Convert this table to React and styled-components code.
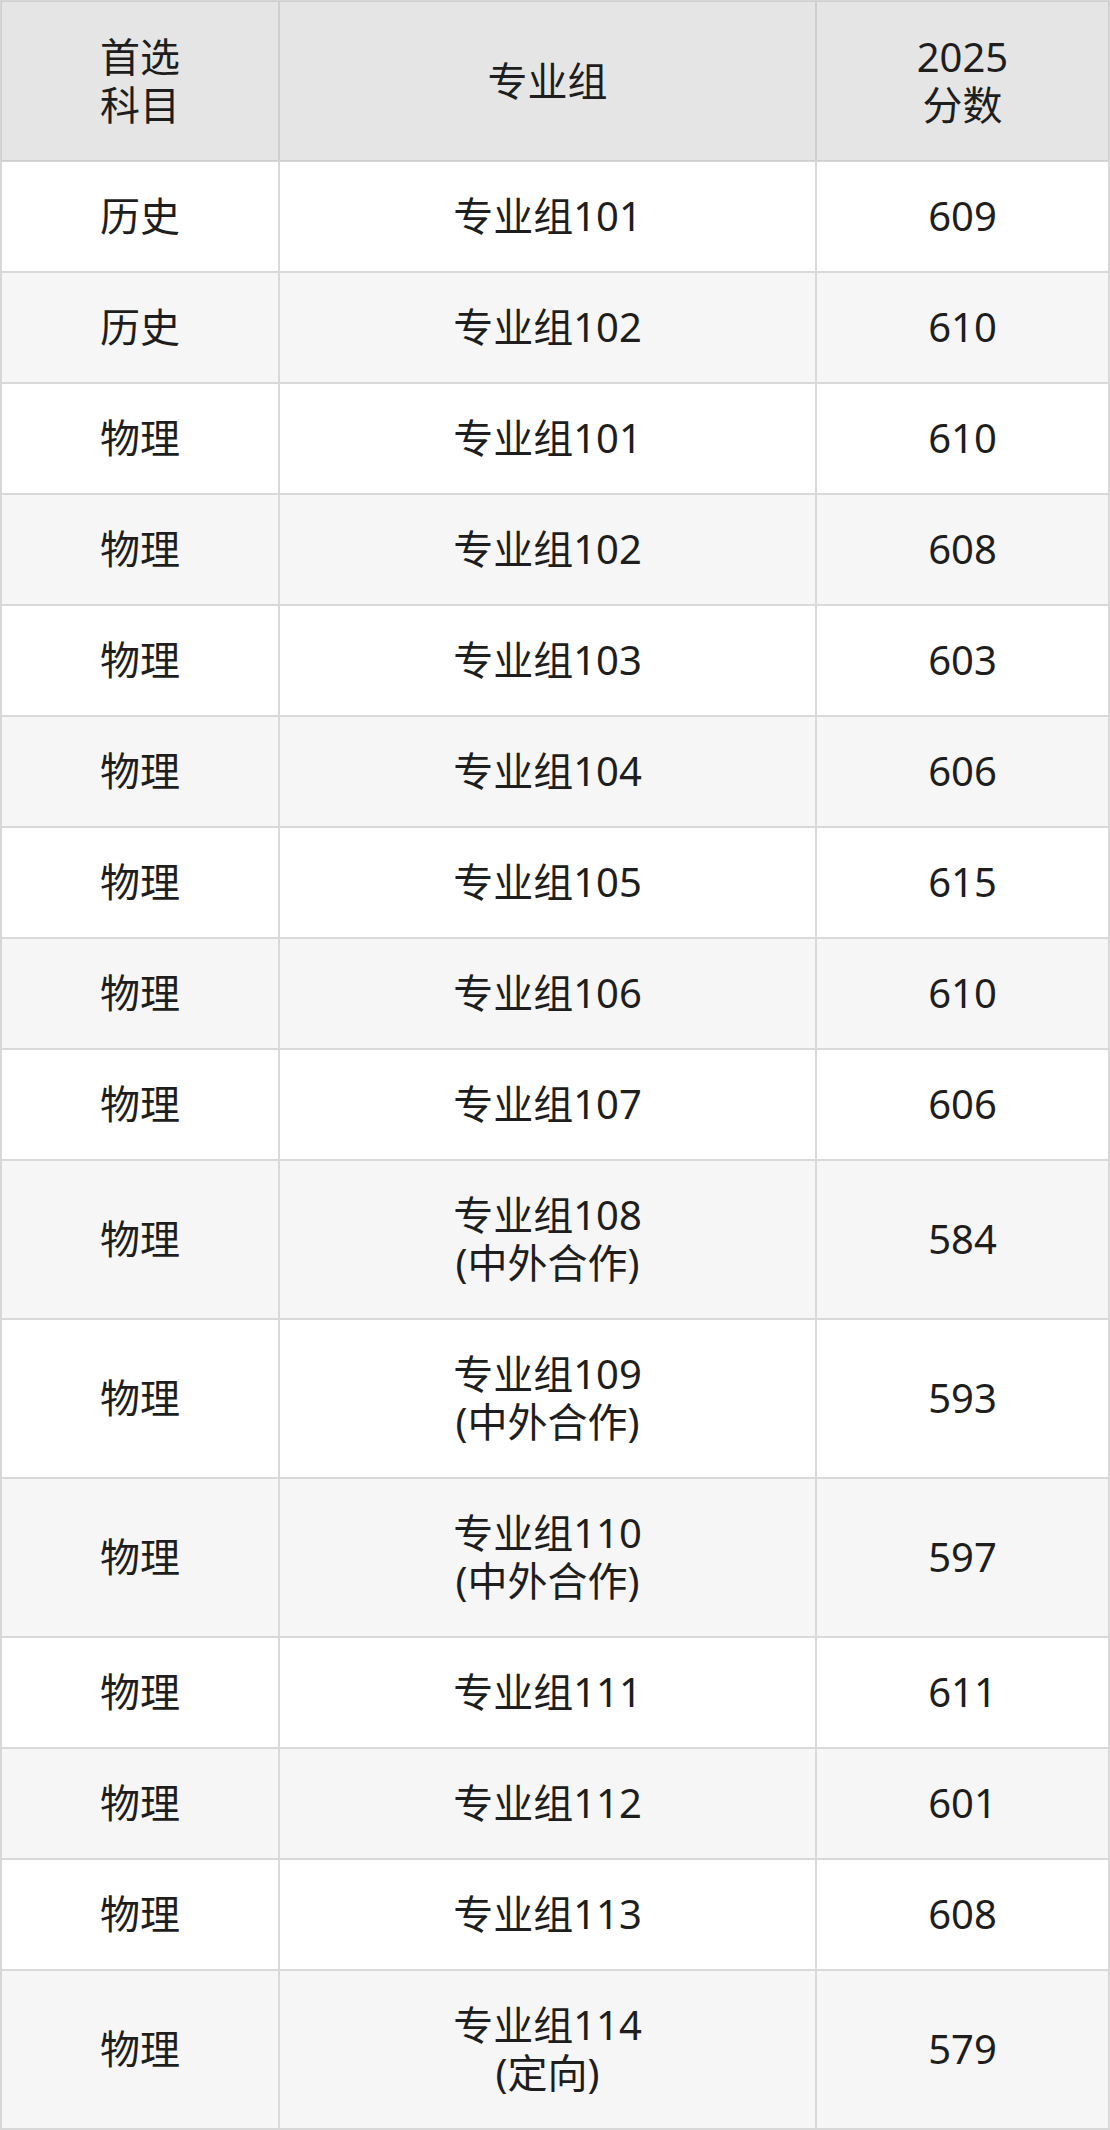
import React from 'react'
import styled,{createGlobalStyle} from 'styled-components'

const rows=[
  {subject:'历史',group:'专业组101',score:'609'},
  {subject:'历史',group:'专业组102',score:'610'},
  {subject:'物理',group:'专业组101',score:'610'},
  {subject:'物理',group:'专业组102',score:'608'},
  {subject:'物理',group:'专业组103',score:'603'},
  {subject:'物理',group:'专业组104',score:'606'},
  {subject:'物理',group:'专业组105',score:'615'},
  {subject:'物理',group:'专业组106',score:'610'},
  {subject:'物理',group:'专业组107',score:'606'},
  {subject:'物理',group:'专业组108',note:'(中外合作)',score:'584'},
  {subject:'物理',group:'专业组109',note:'(中外合作)',score:'593'},
  {subject:'物理',group:'专业组110',note:'(中外合作)',score:'597'},
  {subject:'物理',group:'专业组111',score:'611'},
  {subject:'物理',group:'专业组112',score:'601'},
  {subject:'物理',group:'专业组113',score:'608'},
  {subject:'物理',group:'专业组114',note:'(定向)',score:'579'},
];

const GlobalStyle=createGlobalStyle`
  html,body{margin:0;padding:0;background:#fff;}
  body{font-family:"Noto Sans","Noto Sans CJK SC",sans-serif;}
`;

const Table=styled.table`
  width:1110px;
  border-collapse:separate;
  border-spacing:0;
  border:1px solid #d6d6d6;
  table-layout:fixed;
  color:#1e1e1e;
  font-size:40px;
  line-height:48px;
`;

const Th=styled.th`
  box-sizing:border-box;
  width:${p=>p.$w}px;
  background:#e5e5e5;
  border:1px solid #cfcfcf;
  padding:31px 10px 31px;
  font-weight:400;
  text-align:center;
  vertical-align:middle;
`;

const Tr=styled.tr`
  background:${p=>p.$alt?'#f6f6f6':'#fff'};
`;

const Td=styled.td`
  border:1px solid #d9d9d9;
  padding:30px 10px 31px;
  text-align:center;
  vertical-align:middle;
`;

const Line=styled.span`
  display:block;
`;

export default function App(){
  return (
    <>
      <GlobalStyle/>
      <Table>
        <thead>
          <tr>
            <Th $w={278}><Line>首选</Line><Line>科目</Line></Th>
            <Th $w={537}>专业组</Th>
            <Th><Line>2025</Line><Line>分数</Line></Th>
          </tr>
        </thead>
        <tbody>
          {rows.map((r,i)=>(
            <Tr key={i} $alt={i%2===1}>
              <Td>{r.subject}</Td>
              <Td><Line>{r.group}</Line>{r.note&&<Line>{r.note}</Line>}</Td>
              <Td>{r.score}</Td>
            </Tr>
          ))}
        </tbody>
      </Table>
    </>
  )
}
